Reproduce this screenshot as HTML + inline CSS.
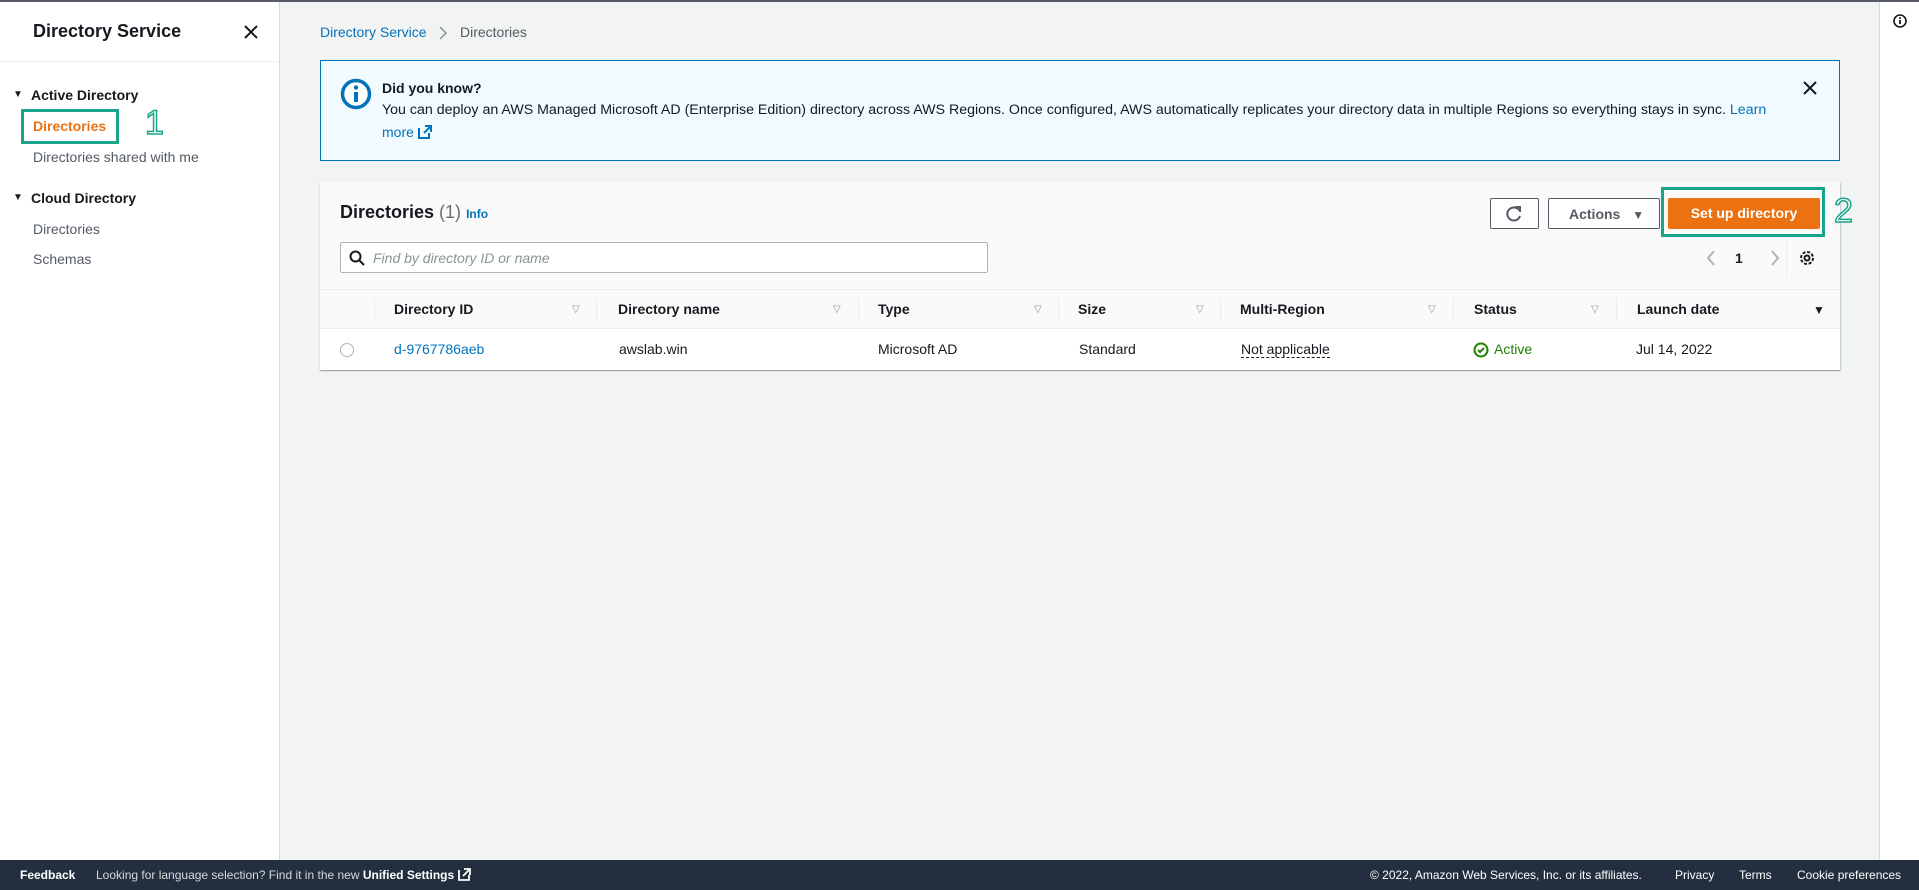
<!DOCTYPE html>
<html><head><meta charset="utf-8"><style>
*{box-sizing:border-box;margin:0;padding:0}
body{width:1919px;height:890px;overflow:hidden;font-family:"Liberation Sans",sans-serif;font-size:14px;color:#16191f;background:#f2f3f3;position:relative}
.a{position:absolute;white-space:nowrap}
.blue{color:#0073bb}
.h{font-weight:bold;top:301px}
.s{color:#879596;font-size:10px;top:304px}
.d{top:298px;width:1px;height:22px;background:#eaeded}
</style></head><body>
<div class="a" style="left:0;top:0;width:1919px;height:2px;background:#545b64"></div>
<!-- sidebar -->
<div class="a" style="left:0;top:2px;width:280px;height:858px;background:#fff;border-right:1px solid #d5dbdb"></div>
<div class="a" style="left:33px;top:21px;font-size:18px;font-weight:bold">Directory Service</div>
<svg class="a" style="left:243px;top:24px" width="16" height="16"><path d="M2 2L14 14M14 2L2 14" stroke="#16191f" stroke-width="2"/></svg>
<div class="a" style="left:0;top:61px;width:280px;height:1px;background:#eaeded"></div>
<div class="a" style="left:13px;top:89px;font-size:10px">▼</div>
<div class="a" style="left:31px;top:87px;font-weight:bold">Active Directory</div>
<div class="a" style="left:33px;top:118px;font-weight:bold;color:#ec7211">Directories</div>
<div class="a" style="left:21px;top:109px;width:98px;height:35px;border:3px solid #1aa58a"></div>
<div class="a" style="left:145px;top:104px;font-size:34px;color:#fff;-webkit-text-stroke:1.5px #1aa58a">1</div>
<div class="a" style="left:33px;top:149px;color:#545b64">Directories shared with me</div>
<div class="a" style="left:13px;top:192px;font-size:10px">▼</div>
<div class="a" style="left:31px;top:190px;font-weight:bold">Cloud Directory</div>
<div class="a" style="left:33px;top:221px;color:#545b64">Directories</div>
<div class="a" style="left:33px;top:251px;color:#545b64">Schemas</div>
<!-- right strip -->
<div class="a" style="left:1879px;top:2px;width:40px;height:858px;background:#fff;border-left:1px solid #d5dbdb"></div>
<svg class="a" style="left:1893px;top:14px" width="14" height="14"><circle cx="7" cy="7" r="6" fill="none" stroke="#16191f" stroke-width="1.6"/><path d="M7 6v4" stroke="#16191f" stroke-width="1.8"/><circle cx="7" cy="4" r="1" fill="#16191f"/></svg>
<!-- breadcrumb -->
<div class="a blue" style="left:320px;top:24px">Directory Service</div>
<svg class="a" style="left:438px;top:25px" width="10" height="16"><path d="M2 2L8 8L2 14" fill="none" stroke="#879596" stroke-width="1.5"/></svg>
<div class="a" style="left:460px;top:24px;color:#545b64">Directories</div>
<!-- banner -->
<div class="a" style="left:320px;top:60px;width:1520px;height:101px;background:#f1faff;border:1px solid #0073bb"></div>
<svg class="a" style="left:340px;top:78px" width="32" height="32"><circle cx="16" cy="16" r="13.5" fill="#fff" stroke="#0073bb" stroke-width="3.5"/><rect x="14" y="14" width="4" height="10" fill="#0073bb"/><circle cx="16" cy="9.5" r="2.2" fill="#0073bb"/></svg>
<div class="a" style="left:382px;top:80px;font-weight:bold">Did you know?</div>
<div class="a" style="left:382px;top:102px;font-size:14.2px">You can deploy an AWS Managed Microsoft AD (Enterprise Edition) directory across AWS Regions. Once configured, AWS automatically replicates your directory data in multiple Regions so everything stays in sync. <span class="blue">Learn</span></div>
<div class="a blue" style="left:382px;top:124px">more <svg width="14" height="14" style="vertical-align:-2px"><path d="M1 3v10h10V8M7 1h6v6M13 1L6 8" fill="none" stroke="#0073bb" stroke-width="2"/></svg></div>
<svg class="a" style="left:1803px;top:81px" width="14" height="14"><path d="M1 1L13 13M13 1L1 13" stroke="#16191f" stroke-width="2"/></svg>
<!-- table container -->
<div class="a" style="left:320px;top:182px;width:1520px;height:188px;background:#fff;box-shadow:0 1px 1px rgba(0,28,36,.3),1px 1px 1px rgba(0,28,36,.15)"></div>
<div class="a" style="left:320px;top:182px;width:1520px;height:108px;background:#fafafa;border-bottom:1px solid #eaeded"></div>
<div class="a" style="left:340px;top:202px;font-size:18px;font-weight:bold">Directories <span style="font-weight:normal;color:#687078">(1)</span> <span class="blue" style="font-size:12px;font-weight:bold">Info</span></div>
<div class="a" style="left:340px;top:242px;width:648px;height:31px;background:#fff;border:1px solid #aab7b8;border-radius:2px"></div>
<svg class="a" style="left:349px;top:250px" width="16" height="16"><circle cx="6.5" cy="6.5" r="5" fill="none" stroke="#16191f" stroke-width="2"/><path d="M10 10L15 15" stroke="#16191f" stroke-width="2"/></svg>
<div class="a" style="left:373px;top:250px;font-style:italic;color:#879596">Find by directory ID or name</div>
<div class="a" style="left:1490px;top:198px;width:49px;height:31px;border:1px solid #545b64;border-radius:2px;background:#fff"></div>
<svg class="a" style="left:1505px;top:205px" width="18" height="18"><path d="M14 5A6.5 6.5 0 1 0 15 11" fill="none" stroke="#545b64" stroke-width="2"/><path d="M10 2h5v5" fill="none" stroke="#545b64" stroke-width="2"/></svg>
<div class="a" style="left:1548px;top:198px;width:112px;height:31px;border:1px solid #545b64;border-radius:2px;background:#fff;font-weight:bold;color:#545b64;padding:7px 0 0 20px">Actions <span style="font-size:12px;margin-left:8px">▼</span></div>
<div class="a" style="left:1668px;top:198px;width:152px;height:31px;background:#ec7211;border-radius:2px;color:#fff;font-weight:bold;text-align:center;line-height:31px">Set up directory</div>
<div class="a" style="left:1661px;top:187px;width:164px;height:50px;border:3px solid #1aa58a"></div>
<div class="a" style="left:1834px;top:192px;font-size:34px;color:#fff;-webkit-text-stroke:1.5px #1aa58a">2</div>
<svg class="a" style="left:1704px;top:249px" width="80" height="18"><path d="M10 2L4 9L10 16" fill="none" stroke="#aab7b8" stroke-width="2"/><path d="M68 2L74 9L68 16" fill="none" stroke="#aab7b8" stroke-width="2"/></svg>
<div class="a" style="left:1735px;top:250px;font-weight:bold">1</div>
<div class="a" style="left:1786px;top:240px;width:1px;height:36px;background:#eaeded"></div>
<svg class="a" style="left:1798px;top:249px" width="18" height="18"><circle cx="9" cy="9" r="2.5" fill="none" stroke="#16191f" stroke-width="2"/><circle cx="9" cy="9" r="6" fill="none" stroke="#16191f" stroke-width="2" stroke-dasharray="3 1.7"/></svg>
<!-- header row -->
<div class="a" style="left:320px;top:290px;width:1520px;height:39px;background:#fafafa;border-bottom:1px solid #eaeded"></div>
<div class="a h" style="left:394px">Directory ID</div>
<div class="a h" style="left:618px">Directory name</div>
<div class="a h" style="left:878px">Type</div>
<div class="a h" style="left:1078px">Size</div>
<div class="a h" style="left:1240px">Multi-Region</div>
<div class="a h" style="left:1474px">Status</div>
<div class="a h" style="left:1637px">Launch date</div>
<div class="a s" style="left:572px">▽</div>
<div class="a s" style="left:833px">▽</div>
<div class="a s" style="left:1034px">▽</div>
<div class="a s" style="left:1196px">▽</div>
<div class="a s" style="left:1428px">▽</div>
<div class="a s" style="left:1591px">▽</div>
<div class="a" style="left:1813px;top:303px;font-size:12px">▼</div>
<div class="a d" style="left:374px"></div>
<div class="a d" style="left:596px"></div>
<div class="a d" style="left:858px"></div>
<div class="a d" style="left:1058px"></div>
<div class="a d" style="left:1220px"></div>
<div class="a d" style="left:1453px"></div>
<div class="a d" style="left:1616px"></div>
<!-- data row -->
<div class="a" style="left:340px;top:343px;width:14px;height:14px;border:1px solid #aab7b8;border-radius:50%"></div>
<div class="a blue" style="left:394px;top:341px">d-9767786aeb</div>
<div class="a" style="left:619px;top:341px">awslab.win</div>
<div class="a" style="left:878px;top:341px">Microsoft AD</div>
<div class="a" style="left:1079px;top:341px">Standard</div>
<div class="a" style="left:1241px;top:341px;border-bottom:1px dashed #16191f">Not applicable</div>
<svg class="a" style="left:1473px;top:342px" width="16" height="16"><circle cx="8" cy="8" r="6.5" fill="none" stroke="#1d8102" stroke-width="2"/><path d="M5 8l2 2l4-4" fill="none" stroke="#1d8102" stroke-width="2"/></svg>
<div class="a" style="left:1494px;top:341px;color:#1d8102">Active</div>
<div class="a" style="left:1636px;top:341px">Jul 14, 2022</div>
<!-- footer -->
<div class="a" style="left:0;top:860px;width:1919px;height:30px;background:#232f3e;font-size:12px;color:#fff">
<div class="a" style="left:20px;top:8px;font-weight:bold">Feedback</div>
<div class="a" style="left:96px;top:8px;color:#d5dbdb">Looking for language selection? Find it in the new <span style="color:#fff;font-weight:bold">Unified Settings</span> <svg width="13" height="13" style="vertical-align:-2px"><path d="M1 2v10h10V7M6 1h6v6M12 1L5 8" fill="none" stroke="#fff" stroke-width="1.8"/></svg></div>
<div class="a" style="left:1370px;top:8px">© 2022, Amazon Web Services, Inc. or its affiliates.</div>
<div class="a" style="left:1675px;top:8px">Privacy</div>
<div class="a" style="left:1739px;top:8px">Terms</div>
<div class="a" style="left:1797px;top:8px">Cookie preferences</div>
</div>
</body></html>
